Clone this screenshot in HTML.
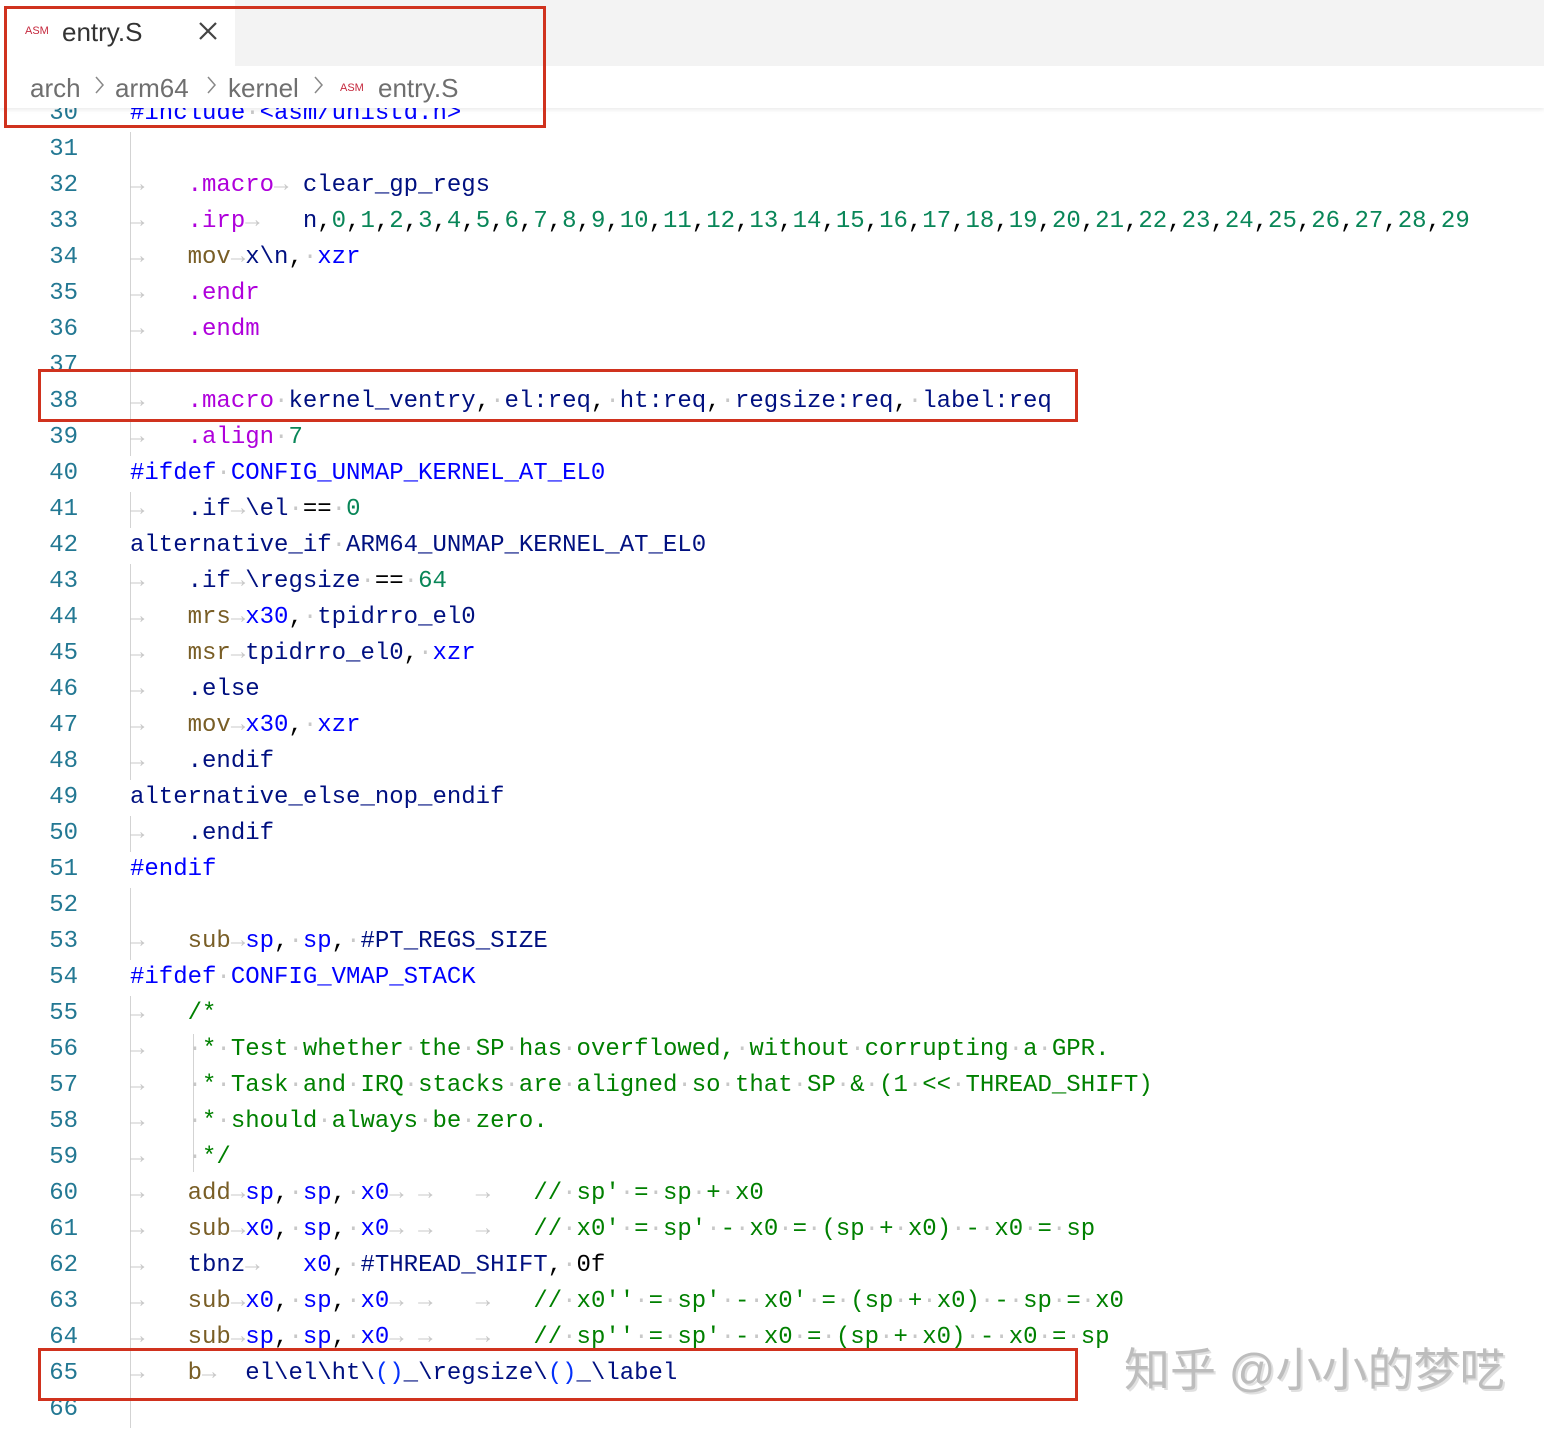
<!DOCTYPE html>
<html><head><meta charset="utf-8"><style>
body{margin:0;width:1544px;height:1430px;background:#fff;position:relative;overflow:hidden;font-family:"Liberation Mono",monospace}
.ln{position:absolute;left:0;width:78px;text-align:right;color:#237893;font-size:24px;line-height:36px;height:36px}
.cd{position:absolute;left:130px;font-size:24px;line-height:36px;height:36px;white-space:pre;color:#000}
i{font-style:normal;color:#c8c8c8}
.k{color:#af00db}.f{color:#795e26}.v{color:#001080}.r{color:#0000ff}.n{color:#098658}.c{color:#008000}.p{color:#0000ff}.b{color:#0431fa}
.g{position:absolute;width:1px;background:#d3d3d3}
.hdr{position:absolute;left:0;top:0;width:1544px;height:108px;background:#fff;z-index:5;font-family:"Liberation Sans",sans-serif;box-shadow:0 2px 4px rgba(0,0,0,.08)}
.tabbar{position:absolute;left:0;top:0;width:1544px;height:66px;background:#f3f3f3}
.tab{position:absolute;left:0;top:0;width:235px;height:66px;background:#fff}
.asm{color:#c5283d;font-size:11px;font-family:"Liberation Sans",sans-serif;position:absolute}
.bc{position:absolute;top:73px;font-size:26px;color:#6f6f6f;white-space:pre}
.ch{position:absolute;top:76px;width:9px;height:18px}
.box{position:absolute;border:3px solid #d0321e;z-index:6}
.wm{position:absolute;left:1124px;top:1334px;font-size:46px;color:#bdbdbd;font-family:"Liberation Sans","Noto Sans CJK SC",sans-serif;text-shadow:2px 2px 0 #e0e0e0;white-space:nowrap}
.L{position:absolute;left:0;top:2px;width:1544px;height:1430px}
</style></head><body>
<div class="hdr">
 <div class="tabbar"></div>
 <div class="tab">
  <span class="asm" style="left:25px;top:25px">ASM</span>
  <span style="position:absolute;left:62px;top:17px;font-size:26px;color:#333">entry.S</span>
  <svg style="position:absolute;left:198px;top:21px" width="20" height="20" viewBox="0 0 20 20"><path d="M2 2L18 18M18 2L2 18" stroke="#444" stroke-width="2.2"/></svg>
 </div>
 <span class="bc" style="left:30px">arch</span>
 <svg class="ch" style="left:95px" viewBox="0 0 9 18"><path d="M1 1L8 9L1 17" fill="none" stroke="#888" stroke-width="1.5"/></svg>
 <span class="bc" style="left:115px">arm64</span>
 <svg class="ch" style="left:207px" viewBox="0 0 9 18"><path d="M1 1L8 9L1 17" fill="none" stroke="#888" stroke-width="1.5"/></svg>
 <span class="bc" style="left:228px">kernel</span>
 <svg class="ch" style="left:314px" viewBox="0 0 9 18"><path d="M1 1L8 9L1 17" fill="none" stroke="#888" stroke-width="1.5"/></svg>
 <span class="asm" style="left:340px;top:82px">ASM</span>
 <span class="bc" style="left:378px">entry.S</span>
</div>
<div class="box" style="left:4px;top:6px;width:536px;height:116px"></div>
<div class="box" style="left:38px;top:369px;width:1034px;height:47px"></div>
<div class="box" style="left:38px;top:1348px;width:1034px;height:47px"></div>
<div class="L">
<div class="g" style="left:130px;top:130px;height:252px"></div>
<div class="g" style="left:130px;top:382px;height:72px"></div>
<div class="g" style="left:130px;top:490px;height:36px"></div>
<div class="g" style="left:130px;top:562px;height:216px"></div>
<div class="g" style="left:130px;top:814px;height:36px"></div>
<div class="g" style="left:130px;top:886px;height:72px"></div>
<div class="g" style="left:130px;top:994px;height:432px"></div>
<div class="g" style="left:193px;top:1032px;height:138px"></div>

<div class="ln" style="top:94px">30</div><div class="cd" style="top:94px"><span class="p">#include</span><i>·</i><span class="p">&lt;asm/unistd.h&gt;</span></div>
<div class="ln" style="top:130px">31</div>
<div class="ln" style="top:166px">32</div><div class="cd" style="top:166px"><i>→   </i><span class="k">.macro</span><i>→ </i><span class="v">clear_gp_regs</span></div>
<div class="ln" style="top:202px">33</div><div class="cd" style="top:202px"><i>→   </i><span class="k">.irp</span><i>→   </i><span class="v">n</span>,<span class="n">0</span>,<span class="n">1</span>,<span class="n">2</span>,<span class="n">3</span>,<span class="n">4</span>,<span class="n">5</span>,<span class="n">6</span>,<span class="n">7</span>,<span class="n">8</span>,<span class="n">9</span>,<span class="n">10</span>,<span class="n">11</span>,<span class="n">12</span>,<span class="n">13</span>,<span class="n">14</span>,<span class="n">15</span>,<span class="n">16</span>,<span class="n">17</span>,<span class="n">18</span>,<span class="n">19</span>,<span class="n">20</span>,<span class="n">21</span>,<span class="n">22</span>,<span class="n">23</span>,<span class="n">24</span>,<span class="n">25</span>,<span class="n">26</span>,<span class="n">27</span>,<span class="n">28</span>,<span class="n">29</span></div>
<div class="ln" style="top:238px">34</div><div class="cd" style="top:238px"><i>→   </i><span class="f">mov</span><i>→</i><span class="v">x\n</span>,<i>·</i><span class="r">xzr</span></div>
<div class="ln" style="top:274px">35</div><div class="cd" style="top:274px"><i>→   </i><span class="k">.endr</span></div>
<div class="ln" style="top:310px">36</div><div class="cd" style="top:310px"><i>→   </i><span class="k">.endm</span></div>
<div class="ln" style="top:346px">37</div>
<div class="ln" style="top:382px">38</div><div class="cd" style="top:382px"><i>→   </i><span class="k">.macro</span><i>·</i><span class="v">kernel_ventry</span>,<i>·</i><span class="v">el:req</span>,<i>·</i><span class="v">ht:req</span>,<i>·</i><span class="v">regsize:req</span>,<i>·</i><span class="v">label:req</span></div>
<div class="ln" style="top:418px">39</div><div class="cd" style="top:418px"><i>→   </i><span class="k">.align</span><i>·</i><span class="n">7</span></div>
<div class="ln" style="top:454px">40</div><div class="cd" style="top:454px"><span class="p">#ifdef</span><i>·</i><span class="p">CONFIG_UNMAP_KERNEL_AT_EL0</span></div>
<div class="ln" style="top:490px">41</div><div class="cd" style="top:490px"><i>→   </i><span class="v">.if</span><i>→</i><span class="v">\el</span><i>·</i>==<i>·</i><span class="n">0</span></div>
<div class="ln" style="top:526px">42</div><div class="cd" style="top:526px"><span class="v">alternative_if</span><i>·</i><span class="v">ARM64_UNMAP_KERNEL_AT_EL0</span></div>
<div class="ln" style="top:562px">43</div><div class="cd" style="top:562px"><i>→   </i><span class="v">.if</span><i>→</i><span class="v">\regsize</span><i>·</i>==<i>·</i><span class="n">64</span></div>
<div class="ln" style="top:598px">44</div><div class="cd" style="top:598px"><i>→   </i><span class="f">mrs</span><i>→</i><span class="r">x30</span>,<i>·</i><span class="v">tpidrro_el0</span></div>
<div class="ln" style="top:634px">45</div><div class="cd" style="top:634px"><i>→   </i><span class="f">msr</span><i>→</i><span class="v">tpidrro_el0</span>,<i>·</i><span class="r">xzr</span></div>
<div class="ln" style="top:670px">46</div><div class="cd" style="top:670px"><i>→   </i><span class="v">.else</span></div>
<div class="ln" style="top:706px">47</div><div class="cd" style="top:706px"><i>→   </i><span class="f">mov</span><i>→</i><span class="r">x30</span>,<i>·</i><span class="r">xzr</span></div>
<div class="ln" style="top:742px">48</div><div class="cd" style="top:742px"><i>→   </i><span class="v">.endif</span></div>
<div class="ln" style="top:778px">49</div><div class="cd" style="top:778px"><span class="v">alternative_else_nop_endif</span></div>
<div class="ln" style="top:814px">50</div><div class="cd" style="top:814px"><i>→   </i><span class="v">.endif</span></div>
<div class="ln" style="top:850px">51</div><div class="cd" style="top:850px"><span class="p">#endif</span></div>
<div class="ln" style="top:886px">52</div>
<div class="ln" style="top:922px">53</div><div class="cd" style="top:922px"><i>→   </i><span class="f">sub</span><i>→</i><span class="r">sp</span>,<i>·</i><span class="r">sp</span>,<i>·</i><span class="v">#PT_REGS_SIZE</span></div>
<div class="ln" style="top:958px">54</div><div class="cd" style="top:958px"><span class="p">#ifdef</span><i>·</i><span class="p">CONFIG_VMAP_STACK</span></div>
<div class="ln" style="top:994px">55</div><div class="cd" style="top:994px"><i>→   </i><span class="c">/*</span></div>
<div class="ln" style="top:1030px">56</div><div class="cd" style="top:1030px"><i>→   ·</i><span class="c">*<i>·</i>Test<i>·</i>whether<i>·</i>the<i>·</i>SP<i>·</i>has<i>·</i>overflowed,<i>·</i>without<i>·</i>corrupting<i>·</i>a<i>·</i>GPR.</span></div>
<div class="ln" style="top:1066px">57</div><div class="cd" style="top:1066px"><i>→   ·</i><span class="c">*<i>·</i>Task<i>·</i>and<i>·</i>IRQ<i>·</i>stacks<i>·</i>are<i>·</i>aligned<i>·</i>so<i>·</i>that<i>·</i>SP<i>·</i>&amp;<i>·</i>(1<i>·</i>&lt;&lt;<i>·</i>THREAD_SHIFT)</span></div>
<div class="ln" style="top:1102px">58</div><div class="cd" style="top:1102px"><i>→   ·</i><span class="c">*<i>·</i>should<i>·</i>always<i>·</i>be<i>·</i>zero.</span></div>
<div class="ln" style="top:1138px">59</div><div class="cd" style="top:1138px"><i>→   ·</i><span class="c">*/</span></div>
<div class="ln" style="top:1174px">60</div><div class="cd" style="top:1174px"><i>→   </i><span class="f">add</span><i>→</i><span class="r">sp</span>,<i>·</i><span class="r">sp</span>,<i>·</i><span class="r">x0</span><i>→ →   →   </i><span class="c">//<i>·</i>sp'<i>·</i>=<i>·</i>sp<i>·</i>+<i>·</i>x0</span></div>
<div class="ln" style="top:1210px">61</div><div class="cd" style="top:1210px"><i>→   </i><span class="f">sub</span><i>→</i><span class="r">x0</span>,<i>·</i><span class="r">sp</span>,<i>·</i><span class="r">x0</span><i>→ →   →   </i><span class="c">//<i>·</i>x0'<i>·</i>=<i>·</i>sp'<i>·</i>-<i>·</i>x0<i>·</i>=<i>·</i>(sp<i>·</i>+<i>·</i>x0)<i>·</i>-<i>·</i>x0<i>·</i>=<i>·</i>sp</span></div>
<div class="ln" style="top:1246px">62</div><div class="cd" style="top:1246px"><i>→   </i><span class="v">tbnz</span><i>→   </i><span class="r">x0</span>,<i>·</i><span class="v">#THREAD_SHIFT</span>,<i>·</i>0f</div>
<div class="ln" style="top:1282px">63</div><div class="cd" style="top:1282px"><i>→   </i><span class="f">sub</span><i>→</i><span class="r">x0</span>,<i>·</i><span class="r">sp</span>,<i>·</i><span class="r">x0</span><i>→ →   →   </i><span class="c">//<i>·</i>x0''<i>·</i>=<i>·</i>sp'<i>·</i>-<i>·</i>x0'<i>·</i>=<i>·</i>(sp<i>·</i>+<i>·</i>x0)<i>·</i>-<i>·</i>sp<i>·</i>=<i>·</i>x0</span></div>
<div class="ln" style="top:1318px">64</div><div class="cd" style="top:1318px"><i>→   </i><span class="f">sub</span><i>→</i><span class="r">sp</span>,<i>·</i><span class="r">sp</span>,<i>·</i><span class="r">x0</span><i>→ →   →   </i><span class="c">//<i>·</i>sp''<i>·</i>=<i>·</i>sp'<i>·</i>-<i>·</i>x0<i>·</i>=<i>·</i>(sp<i>·</i>+<i>·</i>x0)<i>·</i>-<i>·</i>x0<i>·</i>=<i>·</i>sp</span></div>
<div class="ln" style="top:1354px">65</div><div class="cd" style="top:1354px"><i>→   </i><span class="f">b</span><i>→  </i><span class="v">el\el\ht\<span class="b">()</span>_\regsize\<span class="b">()</span>_\label</span></div>
<div class="ln" style="top:1390px">66</div>
</div>
<div class="wm">知乎 @小小的梦呓</div>
</body></html>
